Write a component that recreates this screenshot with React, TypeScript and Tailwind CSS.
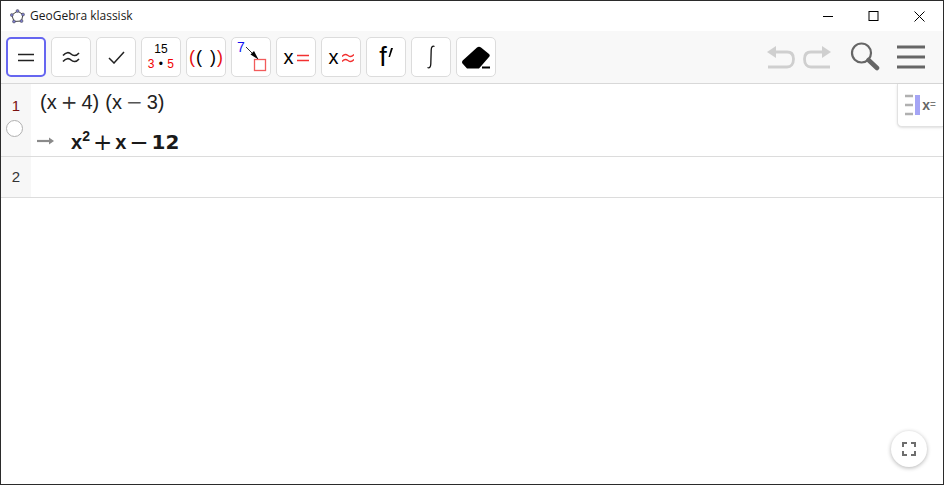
import React from "react";

const Btn = ({ active, children }: { active?: boolean; children: React.ReactNode }) => (
  <div className={active
    ? "relative flex h-[40px] w-[40px] items-center justify-center rounded-[5px] border-2 border-[#6666f0] bg-white"
    : "relative flex h-[40px] w-[40px] items-center justify-center rounded-[5px] border border-[#dcdcdc] bg-white"}>
    {children}
  </div>
);

const Arrow = ({ flip }: { flip?: boolean }) => (
  <svg width="30" height="26" viewBox="0 0 30 26" fill="none" style={flip ? { transform: "scaleX(-1)" } : undefined}>
    <path d="M1 8 L10 2 V14 Z" fill="#cfcfcf" />
    <path d="M8 8 H21 C25.5 8 27.5 11 27.5 15 C27.5 20 25 23 21 23 H2" stroke="#cfcfcf" strokeWidth="2.8" />
  </svg>
);

const sym = { fontFamily: '"DejaVu Sans", sans-serif' };

export default function App() {
  return (
    <div className="flex h-[485px] w-[944px] flex-col overflow-hidden border border-[#2b2b2b] bg-white text-black" style={{ fontFamily: '"Liberation Sans", sans-serif' }}>
      {/* Title bar */}
      <div className="flex h-[30px] shrink-0 items-center bg-white">
        <svg className="ml-[9px]" width="15" height="15" viewBox="0 0 15 15" fill="none">
          <path d="M7.5 2 L13 5.5 L11.5 12 L4 12.5 L1.8 6 Z" stroke="#444" strokeWidth="1" />
          <circle cx="7.5" cy="2" r="1.5" fill="#7b7bc8" stroke="#444" strokeWidth=".5" />
          <circle cx="13" cy="5.5" r="1.5" fill="#7b7bc8" stroke="#444" strokeWidth=".5" />
          <circle cx="11.5" cy="12" r="1.5" fill="#7b7bc8" stroke="#444" strokeWidth=".5" />
          <circle cx="4" cy="12.5" r="1.5" fill="#7b7bc8" stroke="#444" strokeWidth=".5" />
          <circle cx="1.8" cy="6" r="1.5" fill="#7b7bc8" stroke="#444" strokeWidth=".5" />
        </svg>
        <span className="ml-[5px] text-[12px] text-[#1a1a1a]" style={{ fontFamily: '"Open Sans", sans-serif' }}>GeoGebra klassisk</span>
        <div className="ml-auto mr-[1px] flex items-center">
          <div className="flex h-[30px] w-[43px] items-center justify-center">
            <svg width="11" height="11" viewBox="0 0 11 11"><path d="M0 5.5 H10" stroke="#000" strokeWidth="1" /></svg>
          </div>
          <div className="flex h-[30px] w-[46px] items-center justify-center">
            <svg width="11" height="11" viewBox="0 0 11 11" fill="none"><rect x="1" y=".5" width="9" height="9" stroke="#000" /></svg>
          </div>
          <div className="flex h-[30px] w-[46px] items-center justify-center">
            <svg width="11" height="11" viewBox="0 0 11 11"><path d="M.5 .5 L10.5 10.5 M10.5 .5 L.5 10.5" stroke="#000" /></svg>
          </div>
        </div>
      </div>

      {/* Toolbar */}
      <div className="flex h-[53px] shrink-0 items-start gap-[5px] border-b border-[#d8d8d8] bg-[#f8f8f8] pl-[5px] pt-[6px]">
        <Btn active>
          <svg width="16" height="9" viewBox="0 0 16 9"><path d="M0 1.5 H16 M0 7.5 H16" stroke="#222" strokeWidth="1.6" /></svg>
        </Btn>
        <Btn>
          <svg width="18" height="12" viewBox="0 0 18 12" fill="none"><path d="M1 4.5 C4 1 7 1 9 3 S14 5.5 17 2 M1 10.5 C4 7 7 7 9 9 S14 11.5 17 8" stroke="#222" strokeWidth="1.6" /></svg>
        </Btn>
        <Btn>
          <svg width="17" height="13" viewBox="0 0 17 13" fill="none"><path d="M1 7 L6 12 L16 1" stroke="#222" strokeWidth="1.5" /></svg>
        </Btn>
        <Btn>
          <div className="flex flex-col items-center text-[12px] leading-[15px]">
            <span>15</span>
            <span className="tracking-[0.5px] text-[#f00000]">3 <span className="text-black">•</span> 5</span>
          </div>
        </Btn>
        <Btn>
          <span className="flex gap-[1px] text-[18px] leading-none">
            <span className="text-[#e81010]">(</span>
            <span>(</span>
            <span className="w-[6px]" />
            <span>)</span>
            <span className="text-[#e81010]">)</span>
          </span>
        </Btn>
        <Btn>
          <span className="absolute left-[5px] top-[1px] text-[14px] leading-[16px] text-[#1010f0]">7</span>
          <svg className="absolute left-[13px] top-[8px]" width="24" height="28" viewBox="0 0 24 28" fill="none">
            <path d="M1 1 L13 13" stroke="#333" strokeWidth="1" />
            <path d="M5.5 8.5 L9 5 L13.5 13.5 Z" fill="#000" />
            <rect x="9.5" y="13.5" width="11" height="11" stroke="#f25b5b" strokeWidth="1.3" />
          </svg>
        </Btn>
        <Btn>
          <span className="text-[20px] leading-none">x</span>
          <svg className="ml-[3px] mt-[2px]" width="12" height="8" viewBox="0 0 12 8"><path d="M0 1.5 H12 M0 6.5 H12" stroke="#f23030" strokeWidth="1.5" /></svg>
        </Btn>
        <Btn>
          <span className="text-[20px] leading-none">x</span>
          <svg className="ml-[3px] mt-[2px]" width="12" height="10" viewBox="0 0 12 10" fill="none"><path d="M0 3.5 C2 1 4 1 6 2.5 S10 4 12 1.5 M0 8.5 C2 6 4 6 6 7.5 S10 9 12 6.5" stroke="#f23030" strokeWidth="1.3" /></svg>
        </Btn>
        <Btn>
          <span className="text-[27px] leading-none">f</span>
          <svg className="mb-[10px] ml-[1px]" width="5" height="9" viewBox="0 0 5 9"><path d="M3 0 H5 L2 9 H0.5 Z" fill="#000" /></svg>
        </Btn>
        <Btn>
          <svg width="10" height="24" viewBox="0 0 10 24" fill="none"><path d="M8.5 1.5 C6.5 .5 5.3 2 5.2 5 L4.8 19 C4.7 22 3.5 23.5 1.5 22.5" stroke="#111" strokeWidth="1.3" /></svg>
        </Btn>
        <Btn>
          <svg width="29" height="23" viewBox="0 0 29 23"><path d="M15 1.5 Q17 0 19 1.5 L27 8 Q28.5 9.5 27 11 L17 22.5 H5 L.5 17.5 Q-.5 16 .7 14.5 Z" fill="#000" /><path d="M20 21.5 H28" stroke="#000" strokeWidth="2" /></svg>
        </Btn>

        <div className="ml-auto mr-[18px] flex h-[40px] items-center">
          <Arrow />
          <div className="ml-[6px]"><Arrow flip /></div>
          <svg className="ml-[18px]" width="30" height="30" viewBox="0 0 30 30" fill="none">
            <circle cx="11.5" cy="11" r="9.5" stroke="#666" strokeWidth="2.2" />
            <path d="M18.5 18 L27 26" stroke="#666" strokeWidth="4.5" strokeLinecap="round" />
          </svg>
          <svg className="ml-[17px]" width="28" height="24" viewBox="0 0 28 24"><path d="M0 2 H28 M0 12 H28 M0 22 H28" stroke="#666" strokeWidth="3" /></svg>
        </div>
      </div>

      {/* Algebra */}
      <div className="relative flex-1">
        <div className="flex h-[73px] border-b border-[#dcdcdc]">
          <div className="flex w-[30px] shrink-0 flex-col items-center bg-[#f7f7f7] pt-[14px]">
            <span className="text-[15px] leading-[16px] text-[#7a1010]">1</span>
            <span className="ml-[-4px] mt-[6px] h-[17px] w-[17px] rounded-full border border-[#b0b0b0] bg-white" />
          </div>
          <div className="flex flex-col pl-[9px]">
            <div className="mt-[4px] flex h-[28px] items-center text-[20px] leading-[28px] text-[#222]">
              <span>(x</span>
              <span className="mx-[4px] text-[20px] text-[#333]" style={sym}>+</span>
              <span>4)</span>
              <span className="ml-[6px]">(x</span>
              <span className="mx-[4px] text-[20px] text-[#555]" style={sym}>−</span>
              <span>3)</span>
            </div>
            <div className="mt-[12px] flex h-[28px] items-center">
              <svg width="18" height="10" viewBox="0 0 18 10" fill="none" className="ml-[-3px] mt-[-2px]"><path d="M0 5 H15" stroke="#8a8a8a" strokeWidth="2.2" /><path d="M12 1.5 L17 5 L12 8.5 Z" fill="#8a8a8a" /></svg>
              <div className="ml-[16px] flex items-center text-[20px] font-bold leading-[28px] text-[#1a1a1a]">
                <span>x</span>
                <span className="mb-[12px] text-[14px] leading-[14px]">2</span>
                <span className="mx-[3px] text-[23px] font-normal" style={sym}>+</span>
                <span>x</span>
                <span className="mx-[3px] text-[23px] font-normal" style={sym}>−</span>
                <span className="text-[20px]" style={sym}>12</span>
              </div>
            </div>
          </div>
        </div>
        <div className="flex h-[41px] border-b border-[#dcdcdc]">
          <div className="flex w-[30px] shrink-0 items-start justify-center bg-[#f7f7f7] pt-[12px]">
            <span className="text-[15px] leading-[16px] text-[#333]">2</span>
          </div>
        </div>

        {/* Algebra style tab */}
        <div className="absolute right-0 top-0 flex h-[43px] w-[46px] items-center justify-center rounded-bl-[5px] border-b border-l border-[#e2e2e2] bg-white shadow-sm">
          <svg width="8" height="22" viewBox="0 0 8 22"><path d="M0 2 H8 M0 11 H8 M0 20 H8" stroke="#b0b0b0" strokeWidth="2.4" /></svg>
          <div className="ml-[2px] h-[20px] w-[5px] bg-[#a5a5f5]" />
          <span className="ml-[2px] text-[14px] font-bold leading-none text-[#666]">x</span>
          <span className="text-[10px] leading-none text-[#777]">=</span>
        </div>

        {/* Fullscreen */}
        <div className="absolute bottom-[17px] right-[16px] flex h-[36px] w-[36px] items-center justify-center rounded-full bg-white shadow-[0_1px_4px_rgba(0,0,0,0.3)]">
          <svg width="14" height="14" viewBox="0 0 14 14" fill="none">
            <path d="M1 5 V1 H5 M9 1 H13 V5 M13 9 V13 H9 M5 13 H1 V9" stroke="#6e6e6e" strokeWidth="2" />
          </svg>
        </div>
      </div>
    </div>
  );
}
